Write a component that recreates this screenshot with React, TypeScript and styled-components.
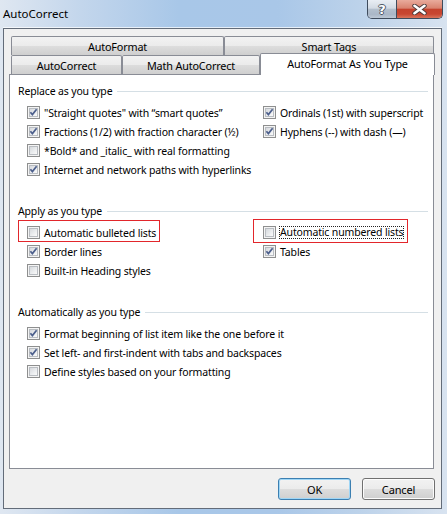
import React from "react";
import styled, { createGlobalStyle } from "styled-components";

const GlobalStyle = createGlobalStyle`
  html, body {
    margin: 0;
    padding: 0;
  }
  body {
    width: 447px;
    height: 514px;
    overflow: hidden;
    font-family: "Noto Sans", "Open Sans", sans-serif;
    font-size: 10.5px;
    letter-spacing: -0.15px;
    color: #000;
  }
`;

const Window = styled.div`
  width: 447px;
  height: 514px;
  box-sizing: border-box;
  display: flex;
  flex-direction: column;
  padding: 0 5px 5px 3px;
  background: linear-gradient(90deg, #dfe7f1 0%, #c3d6ec 18%, #a8c7e8 40%, #a9c7e8 62%, #bcd2ea 80%, #d8e3f0 100%);
`;

const TitleBar = styled.div`
  height: 28px;
  flex: none;
  display: flex;
  justify-content: space-between;
`;

const Title = styled.div`
  align-self: center;
  font-size: 11.5px;
  letter-spacing: 0;
  line-height: 16px;
  margin-top: -1px;
`;

const Controls = styled.div`
  align-self: flex-start;
  display: flex;
  height: 19px;
  box-sizing: border-box;
  border: 1px solid #3f4c5d;
  border-top: none;
  border-radius: 0 0 5px 5px;
  overflow: hidden;
  margin-right: -1px;
`;

const CtlButton = styled.div<{ $close?: boolean }>`
  width: ${p => (p.$close ? 45 : 28)}px;
  display: flex;
  align-items: center;
  justify-content: center;
  background: ${p =>
    p.$close
      ? "linear-gradient(#e9ab9c 0%, #d98370 45%, #c5432e 52%, #c84631 78%, #d9745b 100%)"
      : "linear-gradient(#e9eef4 0%, #d3dbe4 45%, #b3bfcd 52%, #aab7c7 80%, #bdc8d5 100%)"};
  & + & {
    border-left: 1px solid #3f4c5d;
  }
`;

const HelpGlyph = styled.span`
  font-family: "DejaVu Sans", sans-serif;
  font-weight: bold;
  font-size: 13px;
  line-height: 13px;
  color: #fff;
  text-shadow: -1px 0 #4d5866, 1px 0 #4d5866, 0 -1px #4d5866, 0 1px #4d5866;
`;

const Client = styled.div`
  flex: 1;
  display: flex;
  flex-direction: column;
  background: #f0f0f0;
  border: 1px solid #636c79;
  box-shadow: 0 -1px 0 rgba(255, 255, 255, 0.7);
  padding: 7px 7px 8px 5px;
`;

const TabRow = styled.div`
  display: flex;
  height: 19px;
  padding-left: 2px;
`;

const Tab = styled.div<{ $w: number; $active?: boolean }>`
  width: ${p => p.$w}px;
  height: ${p => (p.$active ? 22 : 19)}px;
  margin-top: ${p => (p.$active ? -2 : 0)}px;
  box-sizing: border-box;
  flex: none;
  position: relative;
  z-index: ${p => (p.$active ? 1 : 0)};
  display: flex;
  align-items: center;
  justify-content: center;
  padding-bottom: ${p => (p.$active ? 3 : 0)}px;
  font-size: 10.8px;
  border: 1px solid #898c95;
  border-bottom: none;
  border-radius: 2px 2px 0 0;
  background: ${p =>
    p.$active ? "#fff" : "linear-gradient(#f2f2f2 0%, #ebebeb 50%, #dddddd 50%, #cfcfcf 100%)"};
`;

const Panel = styled.div`
  height: 395px;
  box-sizing: border-box;
  flex: none;
  background: #fff;
  border: 1px solid #898c95;
  padding: 6px 5px 0 8px;
  display: flex;
  flex-direction: column;
  gap: 22px;
`;

const Group = styled.div`
  display: flex;
  flex-direction: column;
`;

const GroupHeader = styled.div`
  height: 20px;
  display: flex;
  align-items: center;
  gap: 5px;
  &::after {
    content: "";
    flex: 1;
    height: 1px;
    background: #d5dfe5;
  }
`;

const Rows = styled.div<{ $cols: string }>`
  margin-top: 2px;
  padding-left: 9px;
  display: grid;
  grid-template-columns: ${p => p.$cols};
  grid-auto-rows: 19px;
`;

const Cell = styled.div<{ $mark?: string }>`
  justify-self: start;
  display: flex;
  align-items: center;
  gap: 4px;
  position: relative;
  white-space: nowrap;
  &::after {
    content: ${p => (p.$mark ? '""' : "none")};
    position: absolute;
    inset: ${p => p.$mark || "0"};
    border: 1px solid #e2262b;
    pointer-events: none;
  }
`;

const Label = styled.span<{ $focus?: boolean }>`
  display: inline-block;
  line-height: ${p => (p.$focus ? "11px" : "normal")};
  outline: ${p => (p.$focus ? "1px dotted #222" : "none")};
`;

const Box = styled.span`
  width: 13px;
  height: 13px;
  box-sizing: border-box;
  flex: none;
  border: 1px solid #8e8f8f;
  padding: 1px;
  background: #f4f4f4;
  display: flex;
  position: relative;
`;

const BoxFill = styled.span`
  flex: 1;
  border: 1px solid #b9bdc2;
  background: linear-gradient(135deg, #d6d9dd 0%, #eceef0 60%, #fafafa 100%);
`;

const Tick = styled.svg`
  position: absolute;
  left: 0;
  top: 0;
`;

const Footer = styled.div`
  margin-top: 9px;
  margin-right: -1px;
  display: flex;
  justify-content: flex-end;
  gap: 11px;
`;

const Button = styled.div<{ $default?: boolean }>`
  width: 73px;
  height: 22px;
  box-sizing: border-box;
  display: flex;
  align-items: center;
  justify-content: center;
  font-size: 11px;
  border: 1px solid ${p => (p.$default ? "#3c7fb1" : "#707070")};
  border-radius: 3px;
  background: linear-gradient(#f2f2f2 0%, #ebebeb 50%, #dddddd 50%, #cfcfcf 100%);
  box-shadow: ${p => (p.$default ? "inset 0 0 0 1px #9fd6f6" : "inset 0 0 0 1px #fcfcfc")};
`;

function CheckBox({ checked }: { checked?: boolean }) {
  return (
    <Box>
      <BoxFill />
      {checked && (
        <Tick width="11" height="11" viewBox="0 0 11 11">
          <path d="M2.4 5.2 L4.4 7.6 L8.6 2.2" fill="none" stroke="#4c5f8c" strokeWidth="1.7" />
        </Tick>
      )}
    </Box>
  );
}

type Item = { text: string; checked?: boolean; mark?: string; focus?: boolean } | null;

function Option({ item }: { item: Item }) {
  if (!item) return <div />;
  return (
    <Cell $mark={item.mark}>
      <CheckBox checked={item.checked} />
      <Label $focus={item.focus}>{item.text}</Label>
    </Cell>
  );
}

const replaceItems: Item[] = [
  { text: "\"Straight quotes\" with \u201Csmart quotes\u201D", checked: true },
  { text: "Ordinals (1st) with superscript", checked: true },
  { text: "Fractions (1/2) with fraction character (\u00BD)", checked: true },
  { text: "Hyphens (--) with dash (\u2014)", checked: true },
  { text: "*Bold* and _italic_ with real formatting" },
  null,
  { text: "Internet and network paths with hyperlinks", checked: true },
  null,
];

const applyItems: Item[] = [
  { text: "Automatic bulleted lists", mark: "-3px -4px 0 -9px" },
  { text: "Automatic numbered lists", mark: "-4px -5px -1px -10px", focus: true },
  { text: "Border lines", checked: true },
  { text: "Tables", checked: true },
  { text: "Built-in Heading styles" },
  null,
];

const autoItems: Item[] = [
  { text: "Format beginning of list item like the one before it", checked: true },
  { text: "Set left- and first-indent with tabs and backspaces", checked: true },
  { text: "Define styles based on your formatting" },
];

export default function App() {
  return (
    <>
      <GlobalStyle />
      <Window>
        <TitleBar>
          <Title>AutoCorrect</Title>
          <Controls>
            <CtlButton>
              <HelpGlyph>?</HelpGlyph>
            </CtlButton>
            <CtlButton $close>
              <svg width="15" height="11" viewBox="0 0 15 11">
                <path d="M2.5 1.8 L12.5 9.2 M12.5 1.8 L2.5 9.2" stroke="#4a3a3a" strokeWidth="4.4" strokeLinecap="round" />
                <path d="M2.5 1.8 L12.5 9.2 M12.5 1.8 L2.5 9.2" stroke="#fff" strokeWidth="2.6" strokeLinecap="round" />
              </svg>
            </CtlButton>
          </Controls>
        </TitleBar>
        <Client>
          <TabRow>
            <Tab $w={213}>AutoFormat</Tab>
            <Tab $w={210}>Smart Tags</Tab>
          </TabRow>
          <TabRow>
            <Tab $w={111}>AutoCorrect</Tab>
            <Tab $w={138}>Math AutoCorrect</Tab>
            <Tab $w={175} $active>AutoFormat As You Type</Tab>
          </TabRow>
          <Panel>
            <Group>
              <GroupHeader>Replace as you type</GroupHeader>
              <Rows $cols="236px 1fr">
                {replaceItems.map((it, i) => (
                  <Option key={i} item={it} />
                ))}
              </Rows>
            </Group>
            <Group>
              <GroupHeader>Apply as you type</GroupHeader>
              <Rows $cols="236px 1fr">
                {applyItems.map((it, i) => (
                  <Option key={i} item={it} />
                ))}
              </Rows>
            </Group>
            <Group>
              <GroupHeader>Automatically as you type</GroupHeader>
              <Rows $cols="1fr">
                {autoItems.map((it, i) => (
                  <Option key={i} item={it} />
                ))}
              </Rows>
            </Group>
          </Panel>
          <Footer>
            <Button $default>OK</Button>
            <Button>Cancel</Button>
          </Footer>
        </Client>
      </Window>
    </>
  );
}
